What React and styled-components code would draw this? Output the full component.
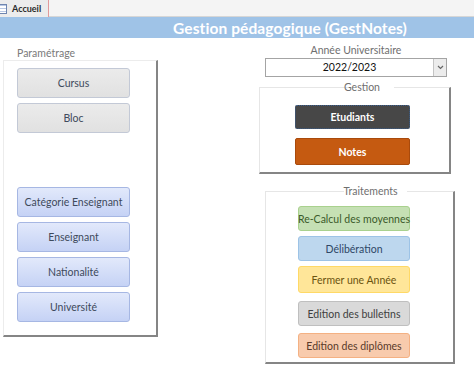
import React from "react";
import styled, { createGlobalStyle } from "styled-components";

const GlobalStyle = createGlobalStyle`
  body {
    margin: 0;
    background: #fff;
    font-family: Lato, "Open Sans", sans-serif;
  }
`;

const parametres = [
  { label: "Cursus", tone: "grey" },
  { label: "Bloc", tone: "grey" },
  { label: "Catégorie Enseignant", tone: "blue", spaced: true },
  { label: "Enseignant", tone: "blue" },
  { label: "Nationalité", tone: "blue" },
  { label: "Université", tone: "blue" },
];

const traitements = [
  { label: "Re-Calcul des moyennes", tone: "green", h: 25, mt: 0 },
  { label: "Délibération", tone: "sky", h: 25, mt: 5 },
  { label: "Fermer une Année", tone: "yellow", h: 27, mt: 5 },
  { label: "Edition des bulletins", tone: "silver", h: 25, mt: 8 },
  { label: "Edition des diplômes", tone: "peach", h: 25, mt: 7 },
];

const tones = {
  green: { bg: "#c5e0b4", border: "#a9d18e", color: "#3b5a2a" },
  sky: { bg: "#bdd7ee", border: "#9dc3e6", color: "#2f4766" },
  yellow: { bg: "#ffe699", border: "#ffd966", color: "#6b5410" },
  silver: { bg: "#d9d9d9", border: "#bfbfbf", color: "#404040" },
  peach: { bg: "#f8cbad", border: "#f4b183", color: "#5a3a2a" },
};

const App = () => {
  return (
    <>
      <GlobalStyle />
      <TabBar>
        <Tab>
          <TabIcon />
          Accueil
        </Tab>
      </TabBar>
      <Header>
        <Title>Gestion pédagogique (GestNotes)</Title>
      </Header>
      <Main>
        <LeftCol>
          <SideLabel>Paramétrage</SideLabel>
          <SideFrame>
            {parametres.map((p) => (
              <ParamButton key={p.label} $tone={p.tone} $spaced={p.spaced}>
                {p.label}
              </ParamButton>
            ))}
          </SideFrame>
        </LeftCol>
        <RightCol>
          <YearLabel>Année Universitaire</YearLabel>
          <Select>
            <SelectValue>2022/2023</SelectValue>
            <SelectArrow>
              <svg width="7" height="5" viewBox="0 0 7 5">
                <path d="M1 1 L3.5 3.5 L6 1" stroke="#666" strokeWidth="1.2" fill="none" />
              </svg>
            </SelectArrow>
          </Select>
          <Group $ml={0} $w={192} $mt={4} $pt={12} $pl={35} $pb={7}>
            <Legend $shift={-10}>Gestion</Legend>
            <DarkButton $bg="#474747" $focus>
              Etudiants
            </DarkButton>
            <DarkButton $bg="#c55a11" $h={27} $mt={9}>
              Notes
            </DarkButton>
          </Group>
          <Group $ml={6} $w={190} $mt={11} $pt={9} $pl={32} $pb={4}>
            <Legend $shift={-5}>Traitements</Legend>
            {traitements.map((t) => (
              <ColorButton key={t.label} $tone={tones[t.tone]} $h={t.h} $mt={t.mt}>
                {t.label}
              </ColorButton>
            ))}
          </Group>
        </RightCol>
      </Main>
    </>
  );
};

export default App;

const TabBar = styled.div`
  height: 16px;
  background: #f4f4f4;
  border-bottom: 1px solid #d6d6d6;
  display: flex;
`;
const Tab = styled.div`
  width: 49px;
  height: 17px;
  box-sizing: border-box;
  background: #ececec;
  border-right: 1px solid #e29a9a;
  display: flex;
  align-items: center;
  gap: 5px;
  font-size: 9px;
  font-weight: 700;
  color: #2a2a2a;
`;
const TabIcon = styled.span`
  width: 6px;
  height: 8px;
  border: 1px solid #6f86b0;
  border-left: none;
  background: repeating-linear-gradient(#b9c8e4 0 1px, #fff 1px 3px);
`;
const Header = styled.div`
  height: 21px;
  background: #9fc3e7;
  display: flex;
  align-items: center;
  justify-content: center;
  padding-left: 106px;
`;
const Title = styled.div`
  color: #fff;
  font-weight: 700;
  font-size: 15.5px;
  letter-spacing: 0.1px;
`;
const Main = styled.div`
  display: flex;
  padding-top: 5px;
`;
const LeftCol = styled.div`
  margin-left: 3px;
  padding-top: 3px;
  width: 155px;
`;
const SideLabel = styled.div`
  font-size: 10.5px;
  line-height: 14px;
  color: #7a7a7a;
  padding-left: 14px;
`;
const SideFrame = styled.div`
  box-sizing: border-box;
  height: 277px;
  border-top: 1px solid #ececec;
  border-left: 1px solid #ececec;
  border-right: 2px solid #858585;
  border-bottom: 2px solid #858585;
  padding: 7px 0 0 13px;
  display: flex;
  flex-direction: column;
  gap: 5px;
`;
const ParamButton = styled.div`
  width: 113px;
  height: 30px;
  flex-shrink: 0;
  box-sizing: border-box;
  border-radius: 3px;
  display: flex;
  align-items: center;
  justify-content: center;
  font-size: 10.5px;
  color: #3e4a5c;
  margin-top: ${(p) => (p.$spaced ? "49px" : "0")};
  border: 1px solid ${(p) => (p.$tone === "blue" ? "#a6b7e3" : "#c3c9d6")};
  background: ${(p) =>
    p.$tone === "blue"
      ? "linear-gradient(#e2e9fb, #c5d2f5)"
      : "linear-gradient(#ebebeb, #e1e1e1)"};
`;
const RightCol = styled.div`
  margin-left: 101px;
  width: 200px;
  display: flex;
  flex-direction: column;
`;
const YearLabel = styled.div`
  margin-left: 6px;
  width: 182px;
  text-align: center;
  font-size: 10.5px;
  line-height: 14px;
  color: #6f6f6f;
`;
const Select = styled.div`
  margin-left: 6px;
  margin-top: 1px;
  width: 182px;
  height: 19px;
  box-sizing: border-box;
  border: 1px solid #a4a4a4;
  display: flex;
  background: #fff;
`;
const SelectValue = styled.div`
  flex: 1;
  text-align: center;
  font-size: 10.5px;
  line-height: 17px;
  color: #111;
`;
const SelectArrow = styled.div`
  width: 12px;
  border-left: 1px solid #c4c4c4;
  background: #ececec;
  display: flex;
  align-items: center;
  justify-content: center;
`;
const Group = styled.fieldset`
  margin: ${(p) => p.$mt}px 0 0 ${(p) => p.$ml}px;
  width: ${(p) => p.$w}px;
  box-sizing: border-box;
  padding: ${(p) => p.$pt}px 0 ${(p) => p.$pb}px ${(p) => p.$pl}px;
  border-top: 1px solid #e6e6e6;
  border-left: 1px solid #e6e6e6;
  border-right: 2px solid #858585;
  border-bottom: 2px solid #858585;
  min-width: 0;
`;
const Legend = styled.legend`
  margin: 0 auto;
  position: relative;
  left: ${(p) => p.$shift}px;
  padding: 0 4px;
  font-size: 10.5px;
  line-height: 12px;
  color: #6f6f6f;
`;
const DarkButton = styled.div`
  width: 115px;
  height: ${(p) => p.$h || 24}px;
  margin-top: ${(p) => p.$mt || 0}px;
  box-sizing: border-box;
  background: ${(p) => p.$bg};
  border-radius: 2px;
  border: 1px ${(p) => (p.$focus ? "dotted #3a5f8f" : "solid #a94a0c")};
  color: #fff;
  font-weight: 700;
  font-size: 10.5px;
  display: flex;
  align-items: center;
  justify-content: center;
`;
const ColorButton = styled.div`
  width: 112px;
  height: ${(p) => p.$h}px;
  margin-top: ${(p) => p.$mt}px;
  box-sizing: border-box;
  border-radius: 3px;
  background: ${(p) => p.$tone.bg};
  border: 1px solid ${(p) => p.$tone.border};
  color: ${(p) => p.$tone.color};
  font-size: 10.5px;
  display: flex;
  align-items: center;
  justify-content: center;
  white-space: nowrap;
`;
